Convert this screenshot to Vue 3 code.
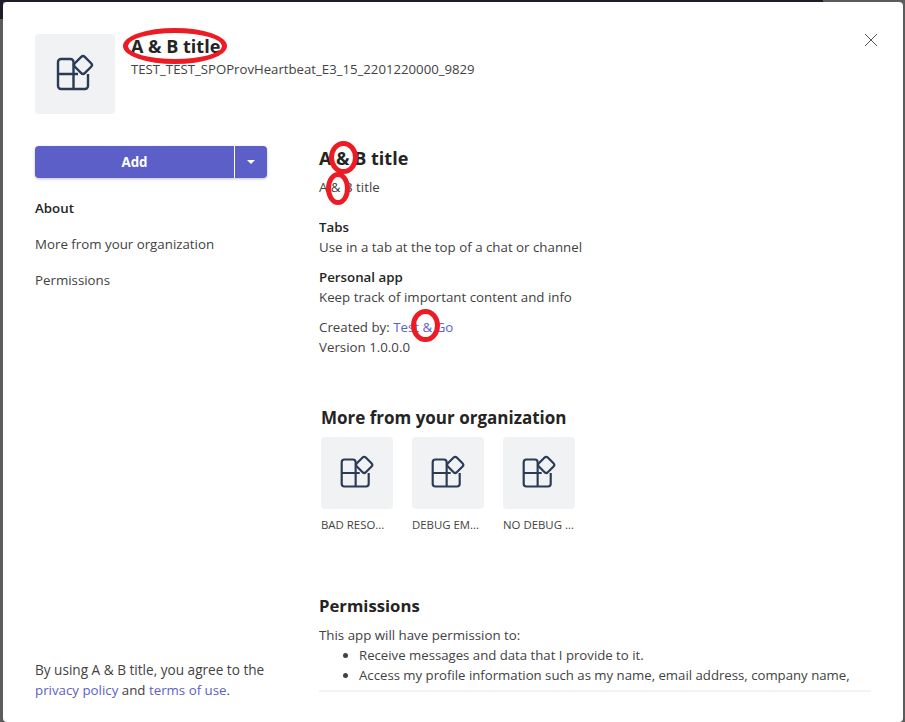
<script setup>
const tiles = ['BAD RESO...', 'DEBUG EM...', 'NO DEBUG ...']
</script>

<template>
  <div class="backdrop">
    <div class="topstrip"></div>
    <div class="leftstrip"></div>
    <div class="modal">
      <header class="head">
        <div class="logo">
          <svg class="glyph" viewBox="0 0 40 40" fill="none" stroke="#2b3a55" stroke-width="2.4">
            <path d="M18.5 14V8a3 3 0 0 0-3-3H6a3 3 0 0 0-3 3v24a3 3 0 0 0 3 3h24a3 3 0 0 0 3-3V20M3 20h20M18.5 14v21" />
            <rect x="21" y="4" width="14" height="14" rx="2.5" transform="rotate(45 28 11)" />
          </svg>
        </div>
        <div class="head-text">
          <div class="app-title">A &amp; B title</div>
          <div class="app-id">TEST_TEST_SPOProvHeartbeat_E3_15_2201220000_9829</div>
          <span class="mark mark-title"></span>
        </div>
        <button class="close" aria-label="Close">
          <svg viewBox="0 0 14 14" width="14" height="14" stroke="#555" stroke-width="1" fill="none"><path d="M1 1l12 12M13 1L1 13" /></svg>
        </button>
      </header>

      <div class="columns">
        <aside class="side">
          <div class="add">
            <span class="add-main">Add</span>
            <span class="add-more"><i class="caret"></i></span>
          </div>
          <nav class="nav">
            <a class="nav-on">About</a>
            <a>More from your organization</a>
            <a>Permissions</a>
          </nav>
          <div class="terms">
            <div class="terms-first">By using A &amp; B title, you agree to the</div>
            <div><a class="link">privacy policy</a> and <a class="link">terms of use</a>.</div>
          </div>
        </aside>

        <main class="detail">
          <section class="about">
            <h2 class="h-about">A &amp; B title<span class="mark mark-h"></span></h2>
            <p class="desc">A &amp; B title<span class="mark mark-d"></span></p>
            <div class="cap">
              <strong>Tabs</strong>
              <span>Use in a tab at the top of a chat or channel</span>
            </div>
            <div class="cap">
              <strong>Personal app</strong>
              <span>Keep track of important content and info</span>
            </div>
            <div class="meta">
              <span>Created by: <a class="link maker">Test &amp; Go<span class="mark mark-l"></span></a></span>
              <span>Version 1.0.0.0</span>
            </div>
          </section>

          <section class="more">
            <h2>More from your organization</h2>
            <div class="tiles">
              <div v-for="t in tiles" :key="t" class="tile">
                <div class="tile-box">
                  <svg class="glyph" viewBox="0 0 40 40" fill="none" stroke="#2b3a55" stroke-width="2.4">
                    <path d="M18.5 14V8a3 3 0 0 0-3-3H6a3 3 0 0 0-3 3v24a3 3 0 0 0 3 3h24a3 3 0 0 0 3-3V20M3 20h20M18.5 14v21" />
                    <rect x="21" y="4" width="14" height="14" rx="2.5" transform="rotate(45 28 11)" />
                  </svg>
                </div>
                <div class="tile-name">{{ t }}</div>
              </div>
            </div>
          </section>

          <section class="perms">
            <h2>Permissions</h2>
            <p>This app will have permission to:</p>
            <ul>
              <li>Receive messages and data that I provide to it.</li>
              <li>Access my profile information such as my name, email address, company name,</li>
            </ul>
          </section>
        </main>
      </div>
    </div>
  </div>
</template>

<style>
html, body { margin: 0; background: #5c5c5c; }
</style>

<style scoped>
.backdrop {
  position: relative;
  width: 905px;
  height: 722px;
  overflow: hidden;
  background: #5c5c5c;
  font-family: "Open Sans", "Liberation Sans", sans-serif;
  font-size: 13.3px;
  line-height: 20px;
  color: #424242;
  box-sizing: border-box;
  padding: 2px 2px 0 3px;
}
.topstrip { position: absolute; left: 0; top: 0; width: 823px; height: 2px; background: #1e1e2a; }
.leftstrip { position: absolute; left: 0; top: 0; width: 3px; height: 19px; background: #1e1e2a; }
.modal {
  position: relative;
  height: 720px;
  background: #fff;
  border-radius: 4px;
  box-sizing: border-box;
  padding: 32px 32px 0;
  display: flex;
  flex-direction: column;
}
.head { display: flex; gap: 16px; height: 80px; position: relative; }
.logo {
  width: 80px; height: 80px; border-radius: 4px; background: #f1f2f4;
  display: flex; align-items: center; justify-content: center;
}
.glyph { width: 40px; height: 40px; }
.head-text { position: relative; }
.app-title { font-size: 18px; font-weight: 700; color: #242424; line-height: 24px; }
.app-id { font-size: 13.2px; line-height: 20px; margin-top: 1px; }
.close {
  position: absolute; right: -7px; top: -1px; border: 0; background: none; padding: 0; width: 14px; height: 14px;
}
.columns { display: flex; gap: 52px; flex: 1; margin-top: 32px; min-height: 0; }
.side { width: 232px; display: flex; flex-direction: column; }
.add {
  display: flex; height: 32px; background: #5b5fc7; border-radius: 4px; color: #fff; font-weight: 700;
  box-shadow: 0 1px 3px rgba(0,0,0,.25);
}
.add-main { flex: 1; display: flex; align-items: center; justify-content: center; }
.add-more { width: 32px; border-left: 1px solid #fff; display: flex; align-items: center; justify-content: center; }
.caret { width: 0; height: 0; border: 4px solid transparent; border-top: 4px solid #fff; border-bottom: 0; }
.nav { display: flex; flex-direction: column; gap: 16px; margin-top: 20px; }
.nav a { display: block; }
.nav-on { font-weight: 600; color: #242424; }
.terms { margin: auto 0 22px; }
.terms-first { font-size: 13.6px; }
.link { color: #5b5fc7; }
.detail {
  flex: 1; min-width: 0; height: 558px; margin-top: -12px; padding-top: 12px;
  overflow: hidden; border-bottom: 2px solid #f3f3f3; box-sizing: border-box;
}
h2 { margin: 0; font-size: 16.7px; line-height: 24px; font-weight: 700; color: #242424; position: relative; }
.h-about { font-size: 18px; }
.desc { margin: 7px 0 0; position: relative; }
.cap { display: flex; flex-direction: column; margin-top: 10px; }
.about .desc + .cap { margin-top: 20px; }
.cap strong { color: #242424; font-weight: 600; }
.meta { display: flex; flex-direction: column; margin-top: 10px; }
.maker { position: relative; }
.more { margin-top: 49px; padding-left: 2px; }
.more h2 { font-size: 17px; }
.tiles { display: flex; gap: 19px; margin-top: 7px; }
.tile { width: 72px; }
.tile-box {
  width: 72px; height: 72px; border-radius: 4px; background: #f1f2f4;
  display: flex; align-items: center; justify-content: center;
}
.tile-box .glyph { width: 36px; height: 36px; }
.tile-name { font-size: 11.4px; line-height: 16px; margin-top: 8px; white-space: nowrap; }
.perms { margin-top: 61px; }
.perms p { margin: 7px 0 0; }
.perms ul { margin: 0; padding-left: 40px; font-size: 13.2px; }
.mark {
  position: absolute;
  box-sizing: border-box;
  border: 5px solid #ed1c24;
  border-radius: 50%;
  pointer-events: none;
}
.mark-title { left: -8px; top: -6px; width: 104px; height: 36px; }
.mark-h { left: 10px; top: -5px; width: 29px; height: 33px; }
.mark-d { left: 7px; top: -5px; width: 24px; height: 33px; }
.mark-l { left: 18px; top: -9px; width: 29px; height: 33px; }
</style>
